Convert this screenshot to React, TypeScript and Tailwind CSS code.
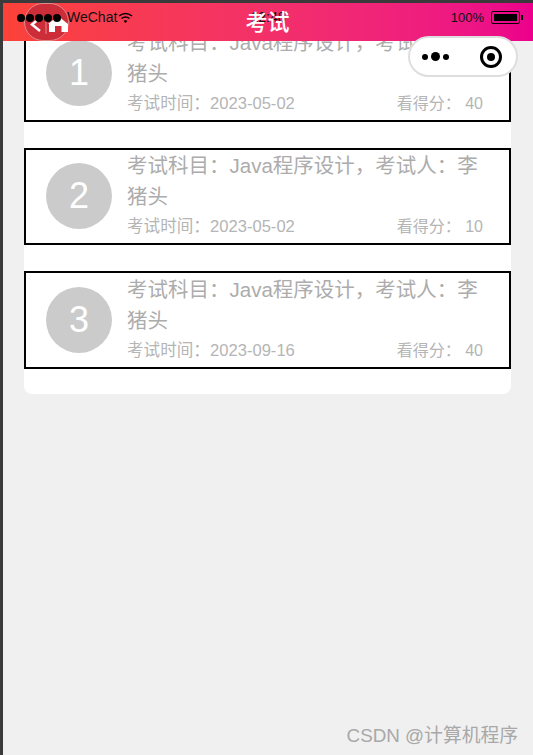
const exams = [
  { id: 1, subject: "考试科目：Java程序设计，考试人：李猪头", date: "2023-05-02", score: 40, size: "h-[97px] pb-[1px]" },
  { id: 2, subject: "考试科目：Java程序设计，考试人：李猪头", date: "2023-05-02", score: 10, size: "h-[97px] pb-[1px]" },
  { id: 3, subject: "考试科目：Java程序设计，考试人：李猪头", date: "2023-09-16", score: 40, size: "h-[98px]" },
];

const font = { fontFamily: '"Liberation Sans", "Noto Sans CJK SC", sans-serif' };

const StatusBar = () => (
  <div className="absolute left-0 right-0 top-0 flex h-[29px] items-center pl-[14px] pr-[10px] text-[14px] text-[#111]">
    <div className="flex gap-[1px]">
      <div className="h-[8px] w-[8px] rounded-full bg-black" />
      <div className="h-[8px] w-[8px] rounded-full bg-black" />
      <div className="h-[8px] w-[8px] rounded-full bg-black" />
      <div className="h-[8px] w-[8px] rounded-full bg-black" />
      <div className="h-[8px] w-[8px] rounded-full bg-black" />
    </div>
    <span className="ml-[6px]">WeChat</span>
    <svg className="ml-[1px]" width="15" height="12" viewBox="0 0 15 12" fill="none" stroke="black" strokeWidth="1.5">
      <path d="M1 4 Q7.5 -1 14 4" />
      <path d="M3.5 6.5 Q7.5 3.5 11.5 6.5" />
      <path d="M7.5 11 L5.5 8.8 Q7.5 7.5 9.5 8.8 Z" fill="black" stroke="none" />
    </svg>
    <span className="ml-auto text-[13px]">100%</span>
    <div className="ml-[7px] flex items-center">
      <div className="h-[13px] w-[29px] rounded-[2px] border border-black p-[2px]">
        <div className="h-full w-full bg-black" />
      </div>
      <div className="ml-[1px] h-[5px] w-[2px] bg-black" />
    </div>
  </div>
);

const NavBack = () => (
  <div className="absolute left-[21px] top-0 h-[38px] w-[45px] rounded-full border border-[#e08a90] bg-[#cc2d38]">
    <svg width="45" height="38" viewBox="0 0 45 38" fill="none">
      <path d="M15 14 L7 20.5 L15 27" stroke="white" strokeWidth="2.5" />
      <path d="M21 12 V30" stroke="#e58b92" strokeWidth="1" />
      <path d="M23 20 L33 12 L43 20 V28 H36.5 V22 H30 V28 H24 V20 Z" fill="white" />
    </svg>
  </div>
);

const Capsule = () => (
  <div className="absolute left-[405px] top-[33px] flex h-[41px] w-[110px] items-center rounded-full border-2 border-[#dedede] bg-white pl-[12px]">
    <div className="flex items-center gap-[3px]">
      <div className="h-[6px] w-[6px] rounded-full bg-black" />
      <div className="h-[9px] w-[9px] rounded-full bg-black" />
      <div className="h-[6px] w-[6px] rounded-full bg-black" />
    </div>
    <div className="ml-[31px] flex h-[22px] w-[22px] items-center justify-center rounded-full border-[3px] border-black">
      <div className="h-[8px] w-[8px] rounded-full bg-black" />
    </div>
  </div>
);

export default function App() {
  return (
    <div className="relative h-[755px] overflow-hidden border-l-[3px] border-t-[3px] border-[#3a3a3a] bg-[#f0f0f0]" style={font}>
      <div className="ml-[21px] mt-[22px] flex h-[369px] w-[487px] flex-col gap-[26px] rounded-b-lg bg-white">
        {exams.map((item) => (
          <div key={item.id} className={`flex items-center border-2 border-black bg-white pl-[20px] pr-[26px] ${item.size}`}>
            <div className="flex h-[66px] w-[66px] shrink-0 items-center justify-center rounded-full bg-[#cbcbcb] text-[36px] text-white">
              {item.id}
            </div>
            <div className="ml-[15px] min-w-0 flex-1 pb-[3px]">
              <div className="text-[20.5px] leading-[31px] text-[#acacac]">{item.subject}</div>
              <div className="mt-[3px] flex justify-between leading-[24px] text-[#b5b5b5]">
                <span className="text-[16.6px]">考试时间：{item.date}</span>
                <span className="text-[16px]">看得分：&nbsp;{item.score}</span>
              </div>
            </div>
          </div>
        ))}
      </div>

      <div className="absolute left-0 right-0 top-0 h-[38px] bg-gradient-to-r from-[#fb4238] to-[#ec008c]" />
      <NavBack />
      <StatusBar />
      <div className="absolute left-0 right-0 top-[6px] text-center text-[14px] leading-[16px] text-[#111]">12:48</div>
      <div className="absolute left-0 right-0 top-0 flex h-[38px] items-center justify-center pr-[1px] text-[22px] font-medium text-white">
        考试
      </div>
      <Capsule />

      <div className="absolute bottom-[6px] right-[15px] text-[18.8px] leading-[26px] text-[#a8a8a8]">CSDN @计算机程序</div>
    </div>
  );
}
